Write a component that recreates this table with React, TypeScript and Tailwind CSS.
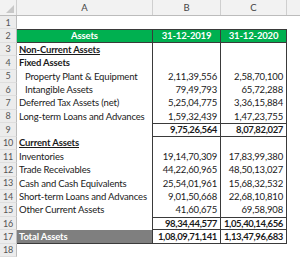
import React from "react";

type Row = {
  n: number;
  a?: string;
  b?: string;
  c?: string;
  kind?: "empty" | "head" | "section" | "bold" | "indent" | "plain" | "sub" | "total";
};

const rows: Row[] = [
  { n: 1, kind: "empty" },
  { n: 2, a: "Assets", b: "31-12-2019", c: "31-12-2020", kind: "head" },
  { n: 3, a: "Non-Current Assets", kind: "section" },
  { n: 4, a: "Fixed Assets", kind: "bold" },
  { n: 5, a: "Property Plant & Equipment", b: "2,11,39,556", c: "2,58,70,100", kind: "indent" },
  { n: 6, a: "Intangible Assets", b: "79,49,793", c: "65,72,288", kind: "indent" },
  { n: 7, a: "Deferred Tax Assets (net)", b: "5,25,04,775", c: "3,36,15,884", kind: "plain" },
  { n: 8, a: "Long-term Loans and Advances", b: "1,59,32,439", c: "1,47,23,755", kind: "plain" },
  { n: 9, a: "", b: "9,75,26,564", c: "8,07,82,027", kind: "sub" },
  { n: 10, a: "Current Assets", kind: "section" },
  { n: 11, a: "Inventories", b: "19,14,70,309", c: "17,83,99,380", kind: "plain" },
  { n: 12, a: "Trade Receivables", b: "44,22,60,965", c: "48,50,13,027", kind: "plain" },
  { n: 13, a: "Cash and Cash Equivalents", b: "25,54,01,961", c: "15,68,32,532", kind: "plain" },
  { n: 14, a: "Short-term Loans and Advances", b: "9,01,50,668", c: "22,68,10,810", kind: "plain" },
  { n: 15, a: "Other Current Assets", b: "41,60,675", c: "69,58,908", kind: "plain" },
  { n: 16, a: "", b: "98,34,44,577", c: "1,05,40,14,656", kind: "sub" },
  { n: 17, a: "Total Assets", b: "1,08,09,71,141", c: "1,13,47,96,683", kind: "total" },
  { n: 18, kind: "empty" },
];

function RowView({ r }: { r: Row }) {
  const inTable = r.n >= 2 && r.n <= 17;
  const vr = inTable ? "border-r border-r-[#3a3a3a]" : "";
  let aCls = "";
  let bcCls = "";
  let aText = "";
  if (r.kind === "head") {
    aCls = "bg-[#00b050] text-white font-bold justify-center border-y border-y-[#3a3a3a]";
    bcCls = "bg-[#00b050] text-white font-bold justify-center border-y border-y-[#3a3a3a]";
  } else if (r.kind === "total") {
    aCls = "bg-[#7f7f7f] text-white font-bold pl-[2px] border-b border-b-[#3a3a3a]";
    bcCls = "font-bold tracking-[-0.35px] justify-end pr-[3px] border-b border-b-[#3a3a3a] text-[#1a1a1a]";
  } else if (r.kind === "sub") {
    aCls = "";
    bcCls = "font-bold tracking-[-0.35px] justify-end pr-[3px] border-y border-y-[#3a3a3a] text-[#1a1a1a]";
  } else {
    aCls = r.kind === "indent" ? "pl-[8px]" : "pl-[2px]";
    if (r.kind === "section" || r.kind === "bold") aCls += " font-bold";
    bcCls = "justify-end pr-[3px] text-[#1a1a1a]";
  }
  if (r.kind === "section") aText = "underline underline-offset-[1px]";
  return (
    <div className="flex h-[13.4px]">
      <div className="w-[17px] shrink-0 flex items-center justify-center bg-[#ececec] border-r border-r-[#bcbcbc] border-b border-b-[#dedede] text-[9px] tracking-[-0.2px] text-[#555]">
        {r.n}
      </div>
      <div className={`w-[136px] shrink-0 flex items-center text-[#1a1a1a] whitespace-nowrap ${vr} ${aCls}`}>
        <span className={aText}>{r.a}</span>
      </div>
      <div className={`w-[68px] shrink-0 flex items-center whitespace-nowrap ${vr} ${bcCls}`}>{r.b}</div>
      <div className={`w-[66px] shrink-0 flex items-center whitespace-nowrap ${vr} ${bcCls}`}>{r.c}</div>
      <div className="flex-1" />
    </div>
  );
}

export default function App() {
  return (
    <div
      className="w-[300px] h-[257px] overflow-hidden bg-white text-[9.5px] tracking-[-0.15px] leading-none"
      style={{ fontFamily: "Lato, 'Open Sans', sans-serif" }}
    >
      <div className="flex h-[16px] bg-[#f2f2f2] border-b border-b-[#bcbcbc] text-[9.5px] tracking-normal text-[#444]">
        <div className="w-[17px] shrink-0 relative border-r border-r-[#cfcfcf]">
          <svg className="absolute right-[2px] bottom-[2px]" width="8" height="8" viewBox="0 0 8 8">
            <polygon points="8,0 8,8 0,8" fill="#c8c8c8" />
          </svg>
        </div>
        <div className="w-[136px] shrink-0 flex items-center justify-center border-r border-r-[#cfcfcf]">A</div>
        <div className="w-[68px] shrink-0 flex items-center justify-center border-r border-r-[#cfcfcf]">B</div>
        <div className="w-[66px] shrink-0 flex items-center justify-center border-r border-r-[#cfcfcf]">C</div>
        <div className="flex-1" />
      </div>
      {rows.map((r) => (
        <RowView key={r.n} r={r} />
      ))}
    </div>
  );
}
